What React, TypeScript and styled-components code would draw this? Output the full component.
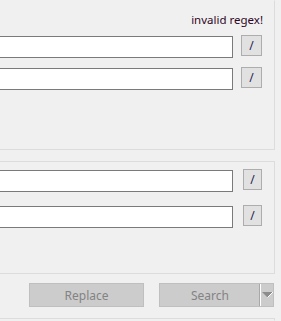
import React from 'react'
import styled, { createGlobalStyle } from 'styled-components'

const GlobalStyle = createGlobalStyle`
  html, body {
    margin: 0;
    padding: 0;
    background: #f0f0f0;
    overflow: hidden;
  }
  body {
    font-family: 'Segoe UI', 'Noto Sans', 'Open Sans', Arial, sans-serif;
    font-size: 12px;
  }
`

// the form is wider than the window, its left part is cut off
const Window = styled.div`
  width: 321px;
  margin-left: -40px;
  display: flex;
  flex-direction: column;
`

const GroupBox = styled.div<{ $top?: boolean; $open?: boolean; $height: number }>`
  width: 315px;
  height: ${({ $height }) => $height}px;
  box-sizing: border-box;
  border: 1px solid #dcdcdc;
  border-top-color: ${({ $top }) => ($top ? '#dcdcdc' : 'transparent')};
  border-bottom-color: ${({ $open }) => ($open ? 'transparent' : '#dcdcdc')};
  display: flex;
  flex-direction: column;
  padding-right: 12px;
`

const ErrorLabel = styled.div`
  align-self: flex-end;
  height: 16px;
  line-height: 16px;
  margin-top: 11px;
  margin-right: -1px;
  font-size: 11.5px;
  color: #2e0626;
`

const FieldRow = styled.div<{ $gap: number }>`
  display: flex;
  align-items: flex-start;
  gap: ${({ $gap }) => $gap}px;
  padding-left: 10px;
`

const TextInput = styled.input`
  flex: 1;
  min-width: 0;
  height: 22px;
  margin-top: 1px;
  box-sizing: border-box;
  border: 1px solid #7a7a7a;
  background: #ffffff;
  outline: none;
  padding: 0 3px;
  font: inherit;
`

const RegexButton = styled.button<{ $width: number }>`
  width: ${({ $width }) => $width}px;
  height: 21px;
  box-sizing: border-box;
  border: 1px solid #adadad;
  background: #e1e1e1;
  padding: 0;
  font-family: 'Noto Sans', sans-serif;
  font-size: 12px;
  color: #1e1e50;
  display: flex;
  align-items: center;
  justify-content: center;
`

const ButtonBar = styled.div`
  display: flex;
  justify-content: flex-end;
  gap: 15px;
  margin-top: 9px;
  padding-right: 7px;
`

const ActionButton = styled.button`
  width: 115px;
  height: 24px;
  box-sizing: border-box;
  border: 1px solid #bfbfbf;
  background: #cccccc;
  color: #838383;
  font: inherit;
  font-size: 12px;
  padding: 0;
  display: flex;
  align-items: center;
`

const ButtonText = styled.span`
  flex: 1;
  text-align: center;
`

const SplitPart = styled.span`
  width: 13px;
  height: 100%;
  box-sizing: border-box;
  border-left: 1px solid #ffffff;
  box-shadow: -1px 0 0 #a8a8a8;
  display: flex;
  align-items: center;
  justify-content: center;
`

function DropArrow() {
  return (
    <svg width="11" height="6" viewBox="0 0 11 6">
      <polygon points="0,0 11,0 5.5,5.5" fill="#8c8c8c" />
      <line x1="11" y1="0" x2="5.5" y2="5.5" stroke="#ffffff" strokeWidth="1" />
    </svg>
  )
}

export default function App() {
  return (
    <Window>
      <GlobalStyle />
      <GroupBox $height={150}>
        <ErrorLabel>invalid regex!</ErrorLabel>
        <FieldRow $gap={8} style={{ marginTop: 7 }}>
          <TextInput />
          <RegexButton $width={21}>/</RegexButton>
        </FieldRow>
        <FieldRow $gap={8} style={{ marginTop: 9 }}>
          <TextInput />
          <RegexButton $width={21}>/</RegexButton>
        </FieldRow>
      </GroupBox>
      <GroupBox $top $height={113} style={{ marginTop: 11 }}>
        <FieldRow $gap={10} style={{ marginTop: 7 }}>
          <TextInput />
          <RegexButton $width={19}>/</RegexButton>
        </FieldRow>
        <FieldRow $gap={10} style={{ marginTop: 13 }}>
          <TextInput />
          <RegexButton $width={19}>/</RegexButton>
        </FieldRow>
      </GroupBox>
      <ButtonBar>
        <ActionButton disabled>
          <ButtonText>Replace</ButtonText>
        </ActionButton>
        <ActionButton disabled>
          <ButtonText>Search</ButtonText>
          <SplitPart>
            <DropArrow />
          </SplitPart>
        </ActionButton>
      </ButtonBar>
      <GroupBox $top $open $height={3} style={{ marginTop: 11 }} />
    </Window>
  )
}
